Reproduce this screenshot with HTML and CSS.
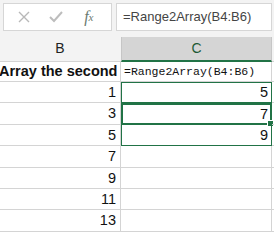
FILE: index.html
```html
<!DOCTYPE html>
<html lang="en">
<head>
    <meta charset="UTF-8">
    <title>Range2Array</title>
    <link rel="stylesheet" href="styles.css">
</head>
<body>
    <div class="formula-bar">
        <div class="name-box">
            <span class="icon">
                <svg width="14" height="14" viewBox="0 0 14 14"><path d="M2 2 L12 12 M12 2 L2 12" stroke="#b8b8b8" stroke-width="1.4" fill="none"/></svg>
            </span>
            <span class="icon">
                <svg width="16" height="14" viewBox="0 0 16 14"><path d="M2 7 L6 11 L14 2" stroke="#bdbdbd" stroke-width="2" fill="none"/></svg>
            </span>
            <span class="icon fx"><i>f</i><sub>x</sub></span>
        </div>
        <div class="formula-input">=Range2Array(B4:B6)</div>
    </div>

    <div class="sheet">
        <div class="col-head">B</div>
        <div class="col-head active">C</div>
        <div class="col-head next"></div>

        <div class="cell title">Array the second</div>
        <div class="cell code">=Range2Array(B4:B6)</div>
        <div class="cell edge"></div>

        <div class="cell">1</div>
        <div class="cell sel first">5</div>
        <div class="cell edge"></div>

        <div class="cell">3</div>
        <div class="cell sel current">7<span class="handle"></span></div>
        <div class="cell edge"></div>

        <div class="cell">5</div>
        <div class="cell sel">9</div>
        <div class="cell edge"></div>

        <div class="cell">7</div>
        <div class="cell"></div>
        <div class="cell edge"></div>

        <div class="cell">9</div>
        <div class="cell"></div>
        <div class="cell edge"></div>

        <div class="cell">11</div>
        <div class="cell"></div>
        <div class="cell edge"></div>

        <div class="cell">13</div>
        <div class="cell"></div>
        <div class="cell edge"></div>
    </div>
</body>
</html>
```

FILE: styles.css
```css
body {
    margin: 0;
    width: 274px;
    height: 240px;
    overflow: hidden;
    background: #ffffff;
    font-family: "Liberation Sans", Arial, sans-serif;
}
.formula-bar {
    display: flex;
    gap: 4px;
    height: 37px;
    padding: 3px 2px 0 3px;
    box-sizing: border-box;
    background: #f3f3f3;
}
.name-box {
    width: 109px;
    height: 28px;
    box-sizing: border-box;
    background: #ffffff;
    border: 1px solid #d6d6d6;
    display: flex;
    align-items: center;
    justify-content: space-around;
    padding: 0 6px 0 4px;
}
.icon {
    display: flex;
    align-items: center;
    justify-content: center;
    width: 24px;
}
.fx {
    font-family: "Liberation Serif", serif;
    font-size: 16px;
    color: #6b7a70;
}
.fx sub {
    font-size: 11px;
    font-style: italic;
}
.formula-input {
    flex: 1;
    height: 28px;
    box-sizing: border-box;
    background: #ffffff;
    border: 1px solid #d6d6d6;
    padding: 0 6px;
    font-size: 13px;
    line-height: 26px;
    color: #444444;
    white-space: nowrap;
    overflow: hidden;
}
.sheet {
    display: grid;
    grid-template-columns: 122px 151px 10px;
    grid-template-rows: 25px 20px repeat(7, 21.4px);
    margin-left: -1px;
}
.col-head {
    background: #f3f3f3;
    font-size: 14px;
    color: #222222;
    text-align: center;
    line-height: 23px;
    border-bottom: 1px solid #d4d4d4;
    box-sizing: border-box;
}
.col-head.active {
    background: #d5d5d5;
    color: #1d5a36;
    border-left: 1px solid #c6c6c6;
    border-right: 1px solid #c6c6c6;
    border-bottom: 2px solid #217346;
    line-height: 22px;
}
.cell {
    box-sizing: border-box;
    border-bottom: 1px solid #d4d4d4;
    border-right: 1px solid #d4d4d4;
    font-size: 14.5px;
    color: #111111;
    text-align: right;
    padding-right: 4px;
    line-height: 20px;
    position: relative;
}
.cell.edge {
    border-right: none;
}
.cell.title {
    font-weight: bold;
    line-height: 19px;
    white-space: nowrap;
    padding-right: 6px;
}
.cell.code {
    font-family: "Liberation Mono", "Courier New", monospace;
    font-size: 11.5px;
    text-align: left;
    padding-left: 3px;
    line-height: 20px;
    white-space: nowrap;
}
.cell.sel {
    border: 1px solid #217346;
    border-top: none;
    padding-right: 3px;
}
.cell.sel.first {
    border-top: 1px solid #217346;
    line-height: 19px;
}
.cell.current {
    border: 2px solid #217346;
    padding-right: 2px;
    line-height: 18px;
}
.handle {
    position: absolute;
    right: -4px;
    bottom: -4px;
    width: 5px;
    height: 5px;
    background: #217346;
    border: 1px solid #ffffff;
}
```
